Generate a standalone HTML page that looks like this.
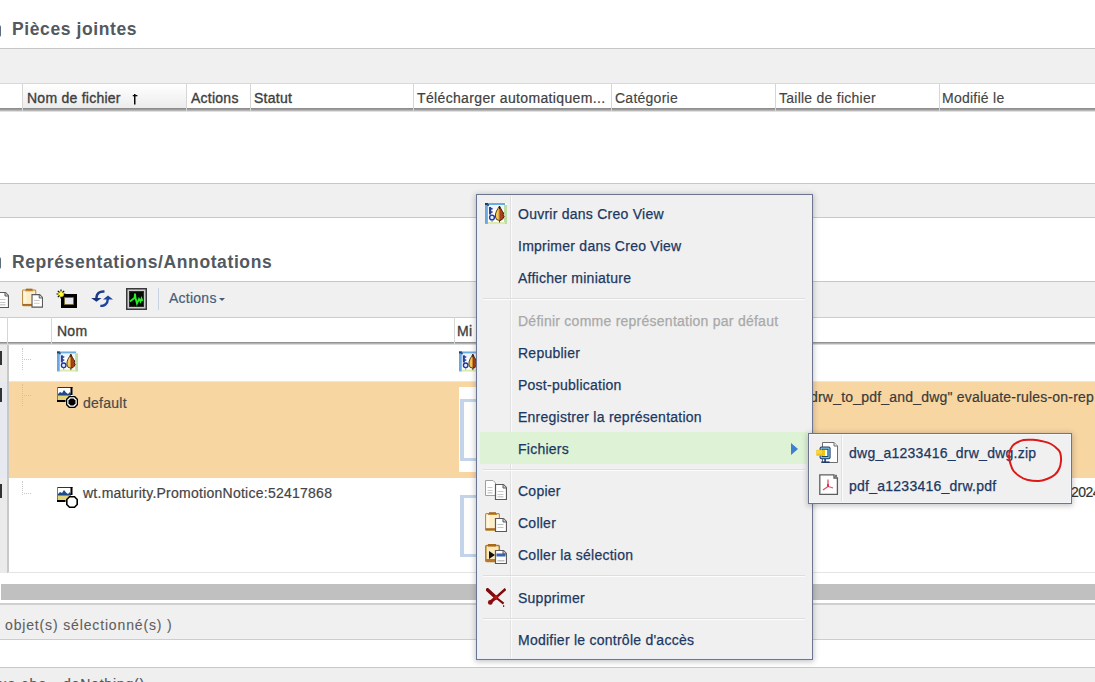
<!DOCTYPE html>
<html><head><meta charset="utf-8">
<style>
*{margin:0;padding:0;box-sizing:border-box}
html,body{width:1095px;height:682px;overflow:hidden;background:#fff;font-family:"Liberation Sans",sans-serif;position:relative}
.a{position:absolute}
.t{position:absolute;white-space:nowrap;font-size:14px;line-height:16px;letter-spacing:0.25px;color:#333;-webkit-text-stroke:0.2px currentColor}
.h1{position:absolute;white-space:nowrap;font-size:17.5px;font-weight:bold;color:#525960;letter-spacing:0.6px;line-height:20px}
.band{position:absolute;left:0;width:1095px;background:#f0f0f0}
.hl{position:absolute;left:0;width:1095px;height:1px;background:#c8c8c8}
.hdr{position:absolute;background:#fff}
.shadow{position:absolute;height:4px;background:linear-gradient(#8e8e8e,#a4a4a4 60%,#d0d0d0)}
.hd{-webkit-text-stroke:0.35px currentColor;color:#3e3e3e}
.vsep{position:absolute;width:1px;background:#d6d6d6}
.mt{position:absolute;white-space:nowrap;font-size:14px;line-height:16px;letter-spacing:0.25px;color:#1c3862;-webkit-text-stroke:0.25px currentColor}
.msep{position:absolute;left:483px;width:322px;height:2px;background:#dedede;border-bottom:1px solid #fcfcfc}
</style></head><body>

<svg width="0" height="0" style="position:absolute">
<defs>
<symbol id="creo" viewBox="0 0 22 21">
<rect x="0" y="0" width="22" height="21" fill="#fbfdff"/>
<rect x="3" y="2" width="16" height="4" fill="#eef6fc"/>
<rect x="0" y="0" width="3" height="21" fill="#78b4e6"/>
<rect x="0.5" y="2" width="1" height="18" fill="#5a9ad8"/>
<rect x="0" y="0" width="20" height="2" fill="#6aaee0"/>
<rect x="0" y="0" width="3" height="2" fill="#1a3a70"/>
<rect x="2" y="1" width="2" height="2" fill="#2a5a9a"/>
<rect x="19" y="2" width="3" height="19" fill="#bcdea4"/>
<rect x="3" y="19" width="17" height="2" fill="#dcecac"/>
<rect x="4" y="4" width="2.2" height="7.5" fill="#2a3e98"/>
<rect x="6" y="5" width="1.6" height="1.6" fill="#2a3e98"/>
<rect x="6" y="8.2" width="1.6" height="1.6" fill="#2a3e98"/>
<circle cx="7" cy="14.5" r="2.4" fill="#e4eeff" stroke="#2036a0" stroke-width="1.4"/>
<rect x="6.6" y="17" width="0.9" height="2" fill="#6a7aa8"/>
<path d="M14.5 3 L13 5.5 L11.5 8 L10.5 11 L10.5 14 L11.5 16.5 L14.5 17.5 Z" fill="#f2cc5a" stroke="#5a3a10" stroke-width="1"/>
<path d="M14.5 3 L16 6 L17.5 8.5 L18.5 10 L18 12 L19 13.5 L18 15.5 L16.5 17 L14.5 17.5 Z" fill="#a8401a" stroke="#4a1408" stroke-width="1"/>
<rect x="13.6" y="6" width="1.2" height="11" fill="#d08a30"/>
<rect x="14" y="17.5" width="1" height="2" fill="#5a3a10"/>
</symbol>
<symbol id="copy" viewBox="0 0 22 20">
<path d="M0.5 0.5 H8 L10.5 3 V15.5 H0.5 Z" fill="#fff" stroke="#a0a0a0"/>
<path d="M10.5 4.5 H18.5 L21.5 7.5 V19.5 H10.5 Z" fill="#fff" stroke="#5a5a5a" stroke-width="1.2"/>
<path d="M18 4.5 V8 H21.5" fill="#d0d0d0" stroke="#5a5a5a"/>
<rect x="2.5" y="7" width="5" height="1" fill="#c8c8c8"/><rect x="2.5" y="10" width="5" height="1" fill="#c8c8c8"/><rect x="2.5" y="12" width="5" height="1.5" fill="#cfcfcf"/>
<rect x="12.5" y="11" width="6" height="1" fill="#c8c8c8"/><rect x="12.5" y="14" width="6" height="1" fill="#c8c8c8"/><rect x="12.5" y="16" width="6" height="1.5" fill="#cfcfcf"/>
</symbol>
<symbol id="paste" viewBox="0 0 22 20">
<rect x="0.6" y="1.6" width="13.8" height="16.6" rx="1" fill="#fdeec8" stroke="#b88a3a" stroke-width="1.1"/>
<rect x="1.5" y="2.5" width="3" height="15" fill="#fff6e0"/>
<rect x="4" y="0.2" width="7" height="2.2" fill="#a86a20"/>
<rect x="3" y="2" width="9" height="1" fill="#c08838"/>
<rect x="0.6" y="16.2" width="13.8" height="2" fill="#a86a20"/>
<path d="M10.5 6.5 H18.5 L21.5 9.5 V19.5 H10.5 Z" fill="#fff" stroke="#5a5a5a" stroke-width="1.2"/>
<path d="M18 6.5 V10 H21.5" fill="#d0d0d0" stroke="#5a5a5a"/>
<rect x="12.5" y="12" width="6" height="1" fill="#c0c0c0"/><rect x="12.5" y="15" width="6" height="1" fill="#c8c8c8"/>
</symbol>
<symbol id="pastesel" viewBox="0 0 22 20">
<rect x="0.8" y="1.5" width="13.5" height="16" rx="1" fill="#fde8b8" stroke="#b47a28" stroke-width="1.5"/>
<rect x="3" y="0" width="8" height="2.5" fill="#a86818"/>
<rect x="0.8" y="15" width="13.5" height="2.5" fill="#b87a2a"/>
<path d="M4 7 L10 11 L4 15 Z" fill="#111"/>
<path d="M10.5 6.5 H18.5 L21.5 9.5 V19.5 H10.5 Z" fill="#fff" stroke="#5a5a5a" stroke-width="1.2"/>
<path d="M18 6.5 V10 H21.5" fill="#d0d0d0" stroke="#5a5a5a"/>
<rect x="11.5" y="9.5" width="9" height="3" fill="#3a62b0"/>
<rect x="12.5" y="16" width="7" height="1.5" fill="#c0c0c0"/>
</symbol>
<symbol id="redx" viewBox="0 0 20 20">
<path d="M1.5 1.8 L10 9.5" stroke="#7e0a0a" stroke-width="3.4" stroke-linecap="square"/>
<path d="M10 9.5 L17.6 15.6" stroke="#7a0a0a" stroke-width="2.1"/>
<path d="M18.6 1.8 L10 9.5" stroke="#820a0a" stroke-width="2.6" stroke-linecap="square"/>
<path d="M10 9.5 L4.5 14" stroke="#8a0c0c" stroke-width="3"/>
<circle cx="4.3" cy="14.4" r="2.4" fill="#8a0c0c"/>
<circle cx="10" cy="9.3" r="2" fill="#b81212"/>
<rect x="17" y="17.3" width="1.2" height="1.5" fill="#4a0808"/>
</symbol>
<symbol id="rep" viewBox="0 0 21 21">
<rect x="0.5" y="0.5" width="15" height="14" fill="#fff"/>
<path d="M1 7 L3 5 L5 6 L7 3 L9 5.5 L11 7 L13 5 L14 7.5 V8 H1 Z" fill="#1f4a8a"/>
<rect x="1" y="8" width="13" height="6" fill="#e6d47a"/>
<rect x="1" y="8" width="13" height="1" fill="#6a9a60"/>
<rect x="0" y="0" width="15.5" height="1" fill="#333"/>
<rect x="13.5" y="0" width="2" height="8" fill="#000"/>
<rect x="0" y="0" width="1" height="15" fill="#777"/>
<rect x="0" y="13" width="8.5" height="2" fill="#000"/>
</symbol>
<symbol id="dwg" viewBox="0 0 22 22">
<path d="M6.5 0.5 H18 L21.5 4 V20.5 H6.5 Z" fill="#fff" stroke="#6e6e6e"/>
<path d="M18 0.5 V4 H21.5" fill="#e8e8e8" stroke="#6e6e6e"/>
<rect x="3.6" y="4.6" width="11" height="12.6" rx="2" fill="#1e3a6a"/>
<rect x="4.6" y="5.6" width="9" height="10.6" rx="1" fill="#7cc2ea"/>
<rect x="5.8" y="6.8" width="6.6" height="8.2" fill="#1a4a5a"/>
<rect x="6.8" y="7.8" width="4.6" height="6.2" fill="#fbfdff"/>
<rect x="0.3" y="7.9" width="8.7" height="5.9" fill="#f2c418"/>
<rect x="1" y="8.5" width="5" height="3" fill="#f8d840"/>
<rect x="8.3" y="17" width="1.6" height="3" fill="#1e3a6a"/>
<rect x="5.3" y="19.4" width="8.3" height="1.6" fill="#1e3a6a"/>
</symbol>
<symbol id="pdf" viewBox="0 0 20 21">
<path d="M0.8 0.8 H15 V4 H18.4 V20.4 H0.8 Z" fill="#fff" stroke="#5e5e5e" stroke-width="1.3"/>
<rect x="15.6" y="0.8" width="2.4" height="2.4" fill="#777"/>
<path d="M9 5.5 V12.5 L4 16 M9.5 12.5 L14 14" fill="none" stroke="#e2506a" stroke-width="1.3"/>
<rect x="8" y="10" width="2" height="3" fill="#d83a5a"/>
</symbol>
</defs></svg>

<!-- Section 1: Pièces jointes -->
<div class="a" style="left:-4px;top:25px;width:5px;height:12px;border-radius:2px;background:#5d6e7e"></div>
<div class="h1" style="left:12px;top:19px">Pièces jointes</div>
<div class="hl" style="top:48px;height:1px;background:#c6c6c6"></div>
<div class="band" style="top:49px;height:34px"></div>
<div class="hl" style="top:83px;background:#d8d8d8"></div>
<!-- header row -->
<div class="hdr" style="left:0;top:84px;width:1095px;height:24px"></div>
<div class="a" style="left:23px;top:84px;width:163px;height:24px;background:linear-gradient(#fff,#ececec)"></div>
<div class="a" style="left:0;top:108px;width:1095px;height:1px;background:#8e8e8e"></div><div class="a" style="left:0;top:109px;width:1095px;height:1px;background:#9c9c9c"></div><div class="a" style="left:0;top:110px;width:1095px;height:1px;background:#b8b8b8"></div><div class="a" style="left:0;top:111px;width:1095px;height:1px;background:#e0e0e0"></div>
<div class="vsep" style="left:22px;top:84px;height:27px"></div>
<div class="vsep" style="left:186px;top:84px;height:27px"></div>
<div class="vsep" style="left:250px;top:84px;height:27px"></div>
<div class="vsep" style="left:413px;top:84px;height:27px"></div>
<div class="vsep" style="left:611px;top:84px;height:27px"></div>
<div class="vsep" style="left:775px;top:84px;height:27px"></div>
<div class="vsep" style="left:939px;top:84px;height:27px"></div>
<div class="t hd" style="left:27px;top:90px">Nom de fichier</div>
<svg class="a" style="left:131px;top:93px" width="8" height="12" viewBox="0 0 8 12"><rect x="3" y="1" width="1.5" height="10.5" fill="#0a0a0a"/><rect x="1.8" y="2" width="4.6" height="1.3" fill="#0a0a0a"/></svg>
<div class="t hd" style="left:191px;top:90px">Actions</div>
<div class="t hd" style="left:254px;top:90px">Statut</div>
<div class="t hd" style="left:417px;top:90px;letter-spacing:0.35px;-webkit-text-stroke:0.2px #404040;color:#404040">Télécharger automatiquem...</div>
<div class="t hd" style="left:615px;top:90px;-webkit-text-stroke:0.15px #444;color:#444">Catégorie</div>
<div class="t hd" style="left:779px;top:90px;-webkit-text-stroke:0.15px #444;color:#444">Taille de fichier</div>
<div class="t hd" style="left:942px;top:90px;-webkit-text-stroke:0.15px #444;color:#444">Modifié le</div>

<div class="hl" style="top:183px"></div>
<div class="band" style="top:184px;height:33px"></div>
<div class="hl" style="top:217px"></div>

<!-- Section 2 -->
<div class="a" style="left:-4px;top:257px;width:5px;height:12px;border-radius:2px;background:#5d6e7e"></div>
<div class="h1" style="left:12px;top:252px">Représentations/Annotations</div>
<div class="hl" style="top:281px;height:1px;background:#c6c6c6"></div>
<div class="band" style="top:282px;height:35px"></div>


<!-- toolbar icons section 2 -->
<div class="vsep" style="left:158px;top:288px;height:22px;background:#c8d4e4"></div>
<div class="t" style="left:169px;top:290px;color:#465c7a">Actions</div>
<div class="a" style="left:219px;top:298px;width:0;height:0;border-left:3.5px solid transparent;border-right:3.5px solid transparent;border-top:3.5px solid #465c7a"></div>

<!-- header row table 2 -->
<div class="hl" style="top:317px;background:#cccccc"></div>
<div class="hdr" style="left:0;top:318px;width:1095px;height:24px"></div>
<div class="a" style="left:0;top:342px;width:1095px;height:1px;background:#929292"></div><div class="a" style="left:0;top:343px;width:1095px;height:1px;background:#b2b2b2"></div><div class="a" style="left:0;top:344px;width:1095px;height:1px;background:#dadada"></div>
<div class="vsep" style="left:7px;top:317px;height:28px"></div>
<div class="vsep" style="left:51px;top:317px;height:28px"></div>
<div class="vsep" style="left:454px;top:317px;height:28px"></div>
<div class="t hd" style="left:57px;top:323px">Nom</div>
<div class="t hd" style="left:457px;top:323px">Mi</div>

<!-- rows -->
<div class="a" style="left:0;top:345px;width:8px;height:228px;background:#ebebeb"></div>
<div class="a" style="left:0;top:382px;width:7px;height:96px;background:#e6e9ef"></div>
<div class="a" style="left:7px;top:345px;width:2px;height:228px;background:#c8c8c8"></div>
<div class="a" style="left:9px;top:382px;width:1086px;height:96px;background:#f8d6a2"></div>
<div class="a" style="left:9px;top:381px;width:1086px;height:1px;background:#f3e3e0"></div>
<div class="a" style="left:8px;top:572px;width:1087px;height:1px;background:#e4e4e4"></div>
<div class="a" style="left:0;top:351px;width:2px;height:14px;background:#333"></div>
<div class="a" style="left:0;top:388px;width:2px;height:14px;background:#333"></div>
<div class="a" style="left:0;top:484px;width:2px;height:14px;background:#333"></div>
<!-- tree lines -->
<div class="a" style="left:22px;top:348px;width:1px;height:22px;border-left:1px dotted #c8c8c8"></div>
<div class="a" style="left:24px;top:359px;width:7px;height:1px;border-top:1px dotted #c8c8c8"></div>
<div class="a" style="left:22px;top:384px;width:1px;height:22px;border-left:1px dotted #d8c0a0"></div>
<div class="a" style="left:24px;top:395px;width:7px;height:1px;border-top:1px dotted #d8c0a0"></div>
<div class="a" style="left:22px;top:481px;width:1px;height:14px;border-left:1px dotted #c8c8c8"></div>
<div class="a" style="left:24px;top:493px;width:7px;height:1px;border-top:1px dotted #c8c8c8"></div>

<div class="t" style="left:83px;top:395px;color:#4a4a4a">default</div>
<div class="t" style="left:83px;top:485px;color:#444">wt.maturity.PromotionNotice:52417868</div>
<div class="t" style="left:810px;top:389px;color:#3a3a3a;letter-spacing:0.2px">drw_to_pdf_and_dwg" evaluate-rules-on-rep</div>
<div class="t" style="left:1071px;top:484px;color:#333;letter-spacing:-0.5px">2024</div>

<!-- thumbnail boxes -->
<div class="a" style="left:459px;top:387px;width:30px;height:85px;background:#fff"></div>
<div class="a" style="left:460px;top:399px;width:30px;height:62px;border:3px solid #c3d3ea;border-left-width:4px;background:#fdfdfd"></div>
<div class="a" style="left:460px;top:495px;width:30px;height:62px;border:3px solid #c3d3ea;border-left-width:4px;background:#fdfdfd"></div>

<!-- scrollbar & footer -->
<div class="a" style="left:1px;top:584px;width:1094px;height:16px;background:#c0c0c0"></div>
<div class="a" style="left:0;top:603px;width:1095px;height:2px;background:#cfcfcf"></div>
<div class="band" style="top:605px;height:34px"></div>
<div class="hl" style="top:639px;background:#cdcdcd"></div>
<div class="t" style="left:5px;top:617px;color:#5e5e5e;letter-spacing:0.85px;-webkit-text-stroke:0.1px #5e5e5e">objet(s) sélectionné(s) )</div>
<div class="hl" style="top:667px;background:#c8c8c8"></div>
<div class="band" style="top:668px;height:14px;background:#efefef"></div>
<div class="t" style="left:-1px;top:676px;color:#555;letter-spacing:1.2px">us.cha</div><div class="t" style="left:63px;top:676px;color:#555;letter-spacing:0.8px">doNothing()</div>


<!-- icon placements -->
<svg class="a" style="left:-13px;top:288px" width="22" height="20"><use href="#copy"/></svg>
<svg class="a" style="left:22px;top:288px" width="21" height="20"><use href="#paste"/></svg>
<svg class="a" style="left:56px;top:289px" width="22" height="20" viewBox="0 0 22 20">
<rect x="5" y="5" width="16" height="14" fill="#000"/>
<rect x="8.5" y="8.5" width="9" height="7" fill="#e6e6f0" stroke="#7a6a20" stroke-width="0.7"/>
<circle cx="5" cy="5" r="3" fill="#f4f418"/>
<path d="M5 0.5 V3 M5 7 V9.5 M0.5 5 H3 M7 5 H9.5 M1.8 1.8 L3.5 3.5 M8.2 1.8 L6.5 3.5 M1.8 8.2 L3.5 6.5" stroke="#111" stroke-width="1.2"/>
<path d="M2 5 H8 M5 2 V8" stroke="#ffff40" stroke-width="1.2"/>
</svg>
<svg class="a" style="left:91px;top:290px" width="23" height="17" viewBox="0 0 23 17">
<path d="M13.5 1.6 C 9 1.2, 5.4 3, 5.4 8.5" fill="none" stroke="#1c3a88" stroke-width="2.4"/>
<path d="M0.2 8 H10.6 L5.4 11.8 Z" fill="#16327a"/>
<path d="M9.3 16 C 13 16.2, 16.8 14, 16.8 9" fill="none" stroke="#1e44a0" stroke-width="2.4"/>
<path d="M12 9.6 H22 L17 5.4 Z" fill="#1e44a0"/>
</svg>
<svg class="a" style="left:126px;top:288px" width="21" height="22" viewBox="0 0 21 22">
<rect x="0" y="0" width="21" height="22" fill="#3a3a3a"/>
<rect x="1.5" y="1.5" width="18" height="19" fill="#cdcdcd"/>
<rect x="3" y="3" width="15" height="16" fill="#2a2a2a"/>
<rect x="4" y="4" width="13" height="14" fill="#050a05"/>
<path d="M4 13.5 L6.5 11.5 L8.5 10 L9 5.5 L9.5 10 L11 15.5 L13 11 L14.5 13.5 L15.5 10.5 L16.5 13" fill="none" stroke="#28f028" stroke-width="1.8"/>
</svg>

<svg class="a" style="left:57px;top:351px" width="21" height="21"><use href="#creo"/></svg>
<svg class="a" style="left:459px;top:351px" width="21" height="21"><use href="#creo"/></svg>
<svg class="a" style="left:57px;top:387px" width="21" height="21"><use href="#rep"/></svg>
<svg class="a" style="left:66px;top:396px" width="12" height="12" viewBox="0 0 12 12"><path d="M3.5 0.5 H8.5 L11.5 3.5 V8.5 L8.5 11.5 H3.5 L0.5 8.5 V3.5 Z" fill="#fff" stroke="#000" stroke-width="1.5"/><path d="M4.5 2.5 H7.5 L9.5 4.5 V7.5 L7.5 9.5 H4.5 L2.5 7.5 V4.5 Z" fill="#000"/></svg>
<svg class="a" style="left:57px;top:487px" width="21" height="21"><use href="#rep"/></svg>
<svg class="a" style="left:66px;top:496px" width="12" height="12" viewBox="0 0 12 12"><path d="M3.5 0.8 H8.5 L11.2 3.5 V8.5 L8.5 11.2 H3.5 L0.8 8.5 V3.5 Z" fill="#fff" stroke="#000" stroke-width="1.6"/></svg>

<!-- context menu -->
<div class="a" style="left:476px;top:194px;width:337px;height:466px;box-shadow:0 1px 5px 1px rgba(60,60,70,0.28)"></div>
<div class="a" style="left:476px;top:194px;width:337px;height:466px;background:#f0f0f0;border:1px solid #6c7690;box-shadow:inset 1px 0 0 1px #eaf0f9"></div>
<div class="a" style="left:510px;top:196px;width:1px;height:462px;background:#e0e0e0"></div>
<div class="a" style="left:511px;top:196px;width:1px;height:462px;background:#fbfbfb"></div>
<div class="a" style="left:480px;top:432px;width:327px;height:32px;background:#def2d5"></div>
<div class="msep" style="top:298px"></div>
<div class="msep" style="top:469px"></div>
<div class="msep" style="top:575px"></div>
<div class="msep" style="top:618px"></div>


<svg class="a" style="left:485px;top:203px" width="22" height="21"><use href="#creo"/></svg>
<svg class="a" style="left:485px;top:480px" width="22" height="20"><use href="#copy"/></svg>
<svg class="a" style="left:485px;top:512px" width="22" height="20"><use href="#paste"/></svg>
<svg class="a" style="left:485px;top:544px" width="22" height="20"><use href="#pastesel"/></svg>
<svg class="a" style="left:486px;top:588px" width="20" height="20"><use href="#redx"/></svg>
<div class="mt" style="left:518px;top:206px">Ouvrir dans Creo View</div>
<div class="mt" style="left:518px;top:238px">Imprimer dans Creo View</div>
<div class="mt" style="left:518px;top:270px">Afficher miniature</div>
<div class="mt" style="left:518px;top:313px;color:#a9a9a9">Définir comme représentation par défaut</div>
<div class="mt" style="left:518px;top:345px">Republier</div>
<div class="mt" style="left:518px;top:377px">Post-publication</div>
<div class="mt" style="left:518px;top:409px">Enregistrer la représentation</div>
<div class="mt" style="left:518px;top:441px">Fichiers</div>
<div class="mt" style="left:518px;top:483px">Copier</div>
<div class="mt" style="left:518px;top:515px">Coller</div>
<div class="mt" style="left:518px;top:547px">Coller la sélection</div>
<div class="mt" style="left:518px;top:590px">Supprimer</div>
<div class="mt" style="left:518px;top:632px">Modifier le contrôle d'accès</div>
<div class="a" style="left:791px;top:443px;width:0;height:0;border-top:6px solid transparent;border-bottom:6px solid transparent;border-left:7px solid #3d7fd0"></div>

<!-- submenu -->
<div class="a" style="left:808px;top:433px;width:264px;height:71px;box-shadow:0 1px 5px 1px rgba(60,60,70,0.28)"></div>
<div class="a" style="left:808px;top:433px;width:264px;height:71px;background:#f0f0f0;border:1px solid #6c7690;box-shadow:inset 0 0 0 1px #f2f6fd"></div>
<div class="a" style="left:841px;top:435px;width:1px;height:67px;background:#e0e0e0"></div>
<div class="a" style="left:842px;top:435px;width:1px;height:67px;background:#fbfbfb"></div>

<svg class="a" style="left:816px;top:442px" width="22" height="22"><use href="#dwg"/></svg>
<svg class="a" style="left:819px;top:474px" width="20" height="21"><use href="#pdf"/></svg>
<div class="mt" style="left:849px;top:445px">dwg_a1233416_drw_dwg.zip</div>
<div class="mt" style="left:849px;top:478px">pdf_a1233416_drw.pdf</div>
<svg class="a" style="left:1000px;top:435px" width="70" height="52" viewBox="0 0 70 52"><path d="M9.0 20.0 C8.7 23.0 9.7 26.3 10.5 29.0 C11.3 31.7 12.0 33.9 13.6 36.0 C15.2 38.1 17.8 40.0 20.0 41.5 C22.2 43.0 23.9 44.0 27.0 44.8 C30.1 45.5 35.3 46.1 38.6 46.0 C41.9 45.9 44.3 45.0 47.0 44.0 C49.7 43.0 52.7 41.6 54.8 39.8 C56.9 38.0 58.5 35.3 59.5 33.0 C60.5 30.7 60.8 28.3 61.0 26.0 C61.2 23.7 60.9 20.8 60.5 19.0 C60.1 17.2 60.1 16.7 58.5 15.0 C56.9 13.3 53.7 10.5 51.0 9.0 C48.3 7.5 45.3 6.9 42.3 6.2 C39.3 5.5 36.1 5.0 33.0 4.8 C29.9 4.6 26.3 4.5 23.6 5.0 C20.9 5.5 18.9 6.5 17.0 7.5 C15.1 8.5 13.7 9.2 12.4 11.0 C11.1 12.8 9.7 15.5 9.2 18.0" fill="none" stroke="#dc1818" stroke-width="2" stroke-linecap="round"/></svg>

</body></html>
